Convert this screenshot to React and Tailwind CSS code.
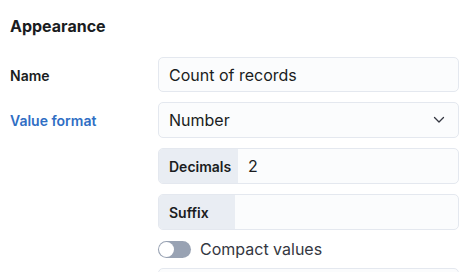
import React from "react";

const font = { fontFamily: "Inter, 'Noto Sans', sans-serif" };

export default function App() {
  return (
    <div className="w-[474px] h-[272px] bg-white overflow-hidden px-[10px] pt-[14px]" style={font}>
      <h2 className="text-[16px] leading-[24px] font-bold text-[#1a1c21]">Appearance</h2>
      <div className="mt-[19px] flex flex-col gap-[10px]">
        <div className="flex items-center">
          <div className="w-[148px] pt-[1px] text-[14px] font-semibold text-[#1a1c21]">Name</div>
          <div className="w-[301px] h-[35px] flex items-center px-[10px] rounded-[5px] border border-[#e4e8ef] bg-[#fbfcfd] text-[16px] text-[#1a1c21]">
            Count of records
          </div>
        </div>
        <div className="flex items-center">
          <div className="w-[148px] pt-[1px] text-[14px] font-semibold text-[#2f6ec4]">Value format</div>
          <div className="w-[301px] h-[36px] flex items-center justify-between pl-[10px] pr-[13px] rounded-[5px] border border-[#e4e8ef] bg-[#fbfcfd] text-[16px] text-[#1a1c21]">
            <span>Number</span>
            <svg width="12" height="8" viewBox="0 0 12 8" fill="none">
              <path d="M1.5 1.5 L6 6 L10.5 1.5" stroke="#343741" strokeWidth="1.3" strokeLinecap="round" strokeLinejoin="round" />
            </svg>
          </div>
        </div>
        <div className="flex items-center">
          <div className="w-[148px]" />
          <div className="w-[301px] h-[36px] flex rounded-[5px] border border-[#e4e8ef] bg-[#fbfcfd] overflow-hidden">
            <div className="w-[79px] flex items-center pl-[10px] bg-[#e9edf3] text-[14px] font-semibold text-[#1a1c21]">Decimals</div>
            <div className="flex items-center pl-[10px] text-[16px] text-[#1a1c21]">2</div>
          </div>
        </div>
        <div className="flex items-center">
          <div className="w-[148px]" />
          <div className="w-[301px] h-[36px] flex rounded-[5px] border border-[#e4e8ef] bg-[#fbfcfd] overflow-hidden">
            <div className="w-[76px] flex items-center pl-[10px] bg-[#e9edf3] text-[14px] font-semibold text-[#1a1c21]">Suffix</div>
            <div className="flex-1" />
          </div>
        </div>
        <div className="flex items-center">
          <div className="w-[148px]" />
          <div className="flex items-center h-[18px]">
            <div className="w-[33px] h-[17px] rounded-full bg-[#98a2b3] relative">
              <div className="absolute left-[1px] top-[1px] w-[15px] h-[15px] rounded-full bg-white" />
            </div>
            <span className="ml-[9px] text-[16px] text-[#343741]">Compact values</span>
          </div>
        </div>
        <div className="flex items-center">
          <div className="w-[148px]" />
          <div className="w-[301px] h-[36px] rounded-[5px] border border-[#e4e8ef] bg-[#fbfcfd]" />
        </div>
      </div>
    </div>
  );
}
